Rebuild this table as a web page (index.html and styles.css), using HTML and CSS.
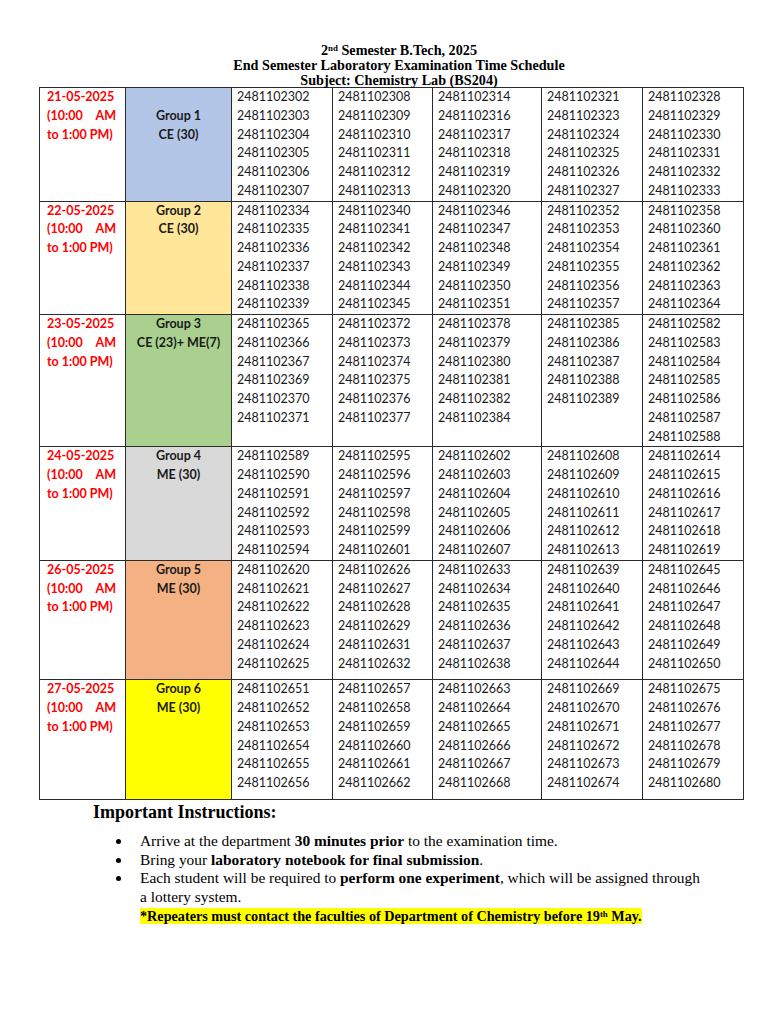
FILE: index.html
```html
<!DOCTYPE html>
<html>
<head>
<meta charset="utf-8">
<link rel="stylesheet" href="styles.css">
</head>
<body>
<div class="page">
  <header class="title">
    <div>2<sup>nd</sup> Semester B.Tech, 2025</div>
    <div>End Semester Laboratory Examination Time Schedule</div>
    <div>Subject: Chemistry Lab (BS204)</div>
  </header>

  <table class="sched">
    <colgroup>
      <col class="c-date"><col class="c-group"><col class="c-n1"><col class="c-n2"><col class="c-n3"><col class="c-n4"><col class="c-n5">
    </colgroup>
    <tr>
      <td class="date"><div>21-05-2025</div><div class="just"><span>(10:00</span><span>AM</span></div><div>to 1:00 PM)</div></td>
      <td class="group g1 offset"><div>Group 1</div><div>CE (30)</div></td>
      <td class="nums"><div>2481102302</div><div>2481102303</div><div>2481102304</div><div>2481102305</div><div>2481102306</div><div>2481102307</div></td>
      <td class="nums"><div>2481102308</div><div>2481102309</div><div>2481102310</div><div>2481102311</div><div>2481102312</div><div>2481102313</div></td>
      <td class="nums"><div>2481102314</div><div>2481102316</div><div>2481102317</div><div>2481102318</div><div>2481102319</div><div>2481102320</div></td>
      <td class="nums"><div>2481102321</div><div>2481102323</div><div>2481102324</div><div>2481102325</div><div>2481102326</div><div>2481102327</div></td>
      <td class="nums"><div>2481102328</div><div>2481102329</div><div>2481102330</div><div>2481102331</div><div>2481102332</div><div>2481102333</div></td>
    </tr>
    <tr>
      <td class="date"><div>22-05-2025</div><div class="just"><span>(10:00</span><span>AM</span></div><div>to 1:00 PM)</div></td>
      <td class="group g2"><div>Group 2</div><div>CE (30)</div></td>
      <td class="nums"><div>2481102334</div><div>2481102335</div><div>2481102336</div><div>2481102337</div><div>2481102338</div><div>2481102339</div></td>
      <td class="nums"><div>2481102340</div><div>2481102341</div><div>2481102342</div><div>2481102343</div><div>2481102344</div><div>2481102345</div></td>
      <td class="nums"><div>2481102346</div><div>2481102347</div><div>2481102348</div><div>2481102349</div><div>2481102350</div><div>2481102351</div></td>
      <td class="nums"><div>2481102352</div><div>2481102353</div><div>2481102354</div><div>2481102355</div><div>2481102356</div><div>2481102357</div></td>
      <td class="nums"><div>2481102358</div><div>2481102360</div><div>2481102361</div><div>2481102362</div><div>2481102363</div><div>2481102364</div></td>
    </tr>
    <tr>
      <td class="date"><div>23-05-2025</div><div class="just"><span>(10:00</span><span>AM</span></div><div>to 1:00 PM)</div></td>
      <td class="group g3"><div>Group 3</div><div>CE (23)+ ME(7)</div></td>
      <td class="nums"><div>2481102365</div><div>2481102366</div><div>2481102367</div><div>2481102369</div><div>2481102370</div><div>2481102371</div></td>
      <td class="nums"><div>2481102372</div><div>2481102373</div><div>2481102374</div><div>2481102375</div><div>2481102376</div><div>2481102377</div></td>
      <td class="nums"><div>2481102378</div><div>2481102379</div><div>2481102380</div><div>2481102381</div><div>2481102382</div><div>2481102384</div></td>
      <td class="nums"><div>2481102385</div><div>2481102386</div><div>2481102387</div><div>2481102388</div><div>2481102389</div></td>
      <td class="nums"><div>2481102582</div><div>2481102583</div><div>2481102584</div><div>2481102585</div><div>2481102586</div><div>2481102587</div><div>2481102588</div></td>
    </tr>
    <tr>
      <td class="date"><div>24-05-2025</div><div class="just"><span>(10:00</span><span>AM</span></div><div>to 1:00 PM)</div></td>
      <td class="group g4"><div>Group 4</div><div>ME (30)</div></td>
      <td class="nums"><div>2481102589</div><div>2481102590</div><div>2481102591</div><div>2481102592</div><div>2481102593</div><div>2481102594</div></td>
      <td class="nums"><div>2481102595</div><div>2481102596</div><div>2481102597</div><div>2481102598</div><div>2481102599</div><div>2481102601</div></td>
      <td class="nums"><div>2481102602</div><div>2481102603</div><div>2481102604</div><div>2481102605</div><div>2481102606</div><div>2481102607</div></td>
      <td class="nums"><div>2481102608</div><div>2481102609</div><div>2481102610</div><div>2481102611</div><div>2481102612</div><div>2481102613</div></td>
      <td class="nums"><div>2481102614</div><div>2481102615</div><div>2481102616</div><div>2481102617</div><div>2481102618</div><div>2481102619</div></td>
    </tr>
    <tr class="tall">
      <td class="date"><div>26-05-2025</div><div class="just"><span>(10:00</span><span>AM</span></div><div>to 1:00 PM)</div></td>
      <td class="group g5"><div>Group 5</div><div>ME (30)</div></td>
      <td class="nums"><div>2481102620</div><div>2481102621</div><div>2481102622</div><div>2481102623</div><div>2481102624</div><div>2481102625</div></td>
      <td class="nums"><div>2481102626</div><div>2481102627</div><div>2481102628</div><div>2481102629</div><div>2481102631</div><div>2481102632</div></td>
      <td class="nums"><div>2481102633</div><div>2481102634</div><div>2481102635</div><div>2481102636</div><div>2481102637</div><div>2481102638</div></td>
      <td class="nums"><div>2481102639</div><div>2481102640</div><div>2481102641</div><div>2481102642</div><div>2481102643</div><div>2481102644</div></td>
      <td class="nums"><div>2481102645</div><div>2481102646</div><div>2481102647</div><div>2481102648</div><div>2481102649</div><div>2481102650</div></td>
    </tr>
    <tr class="tall">
      <td class="date"><div>27-05-2025</div><div class="just"><span>(10:00</span><span>AM</span></div><div>to 1:00 PM)</div></td>
      <td class="group g6"><div>Group 6</div><div>ME (30)</div></td>
      <td class="nums"><div>2481102651</div><div>2481102652</div><div>2481102653</div><div>2481102654</div><div>2481102655</div><div>2481102656</div></td>
      <td class="nums"><div>2481102657</div><div>2481102658</div><div>2481102659</div><div>2481102660</div><div>2481102661</div><div>2481102662</div></td>
      <td class="nums"><div>2481102663</div><div>2481102664</div><div>2481102665</div><div>2481102666</div><div>2481102667</div><div>2481102668</div></td>
      <td class="nums"><div>2481102669</div><div>2481102670</div><div>2481102671</div><div>2481102672</div><div>2481102673</div><div>2481102674</div></td>
      <td class="nums"><div>2481102675</div><div>2481102676</div><div>2481102677</div><div>2481102678</div><div>2481102679</div><div>2481102680</div></td>
    </tr>
  </table>

  <section class="instr">
    <h2>Important Instructions:</h2>
    <ul>
      <li>Arrive at the department <b>30 minutes prior</b> to the examination time.</li>
      <li>Bring your <b>laboratory notebook for final submission</b>.</li>
      <li>Each student will be required to <b>perform one experiment</b>, which will be assigned through<br>a lottery system.</li>
    </ul>
    <p class="note"><mark>*Repeaters must contact the faculties of Department of Chemistry before 19<sup>th</sup> May.</mark></p>
  </section>
</div>
</body>
</html>
```

FILE: styles.css
```css
html, body {
  margin: 0;
  padding: 0;
  background: #ffffff;
}

.page {
  width: 768px;
  padding-top: 43px;
}

.title {
  margin-left: 39px;
  width: 720px;
  text-align: center;
  font-family: "Liberation Serif", "Times New Roman", serif;
  font-weight: bold;
  font-size: 14.2px;
  line-height: 15px;
  color: #000;
}

.title sup,
.note sup {
  font-size: 0.62em;
  line-height: 0;
  vertical-align: 0.45em;
}

.sched {
  margin-left: 39px;
  margin-top: -1px;
  border-collapse: collapse;
  table-layout: fixed;
  width: 704px;
  font-family: Lato, "Open Sans", sans-serif;
  font-size: 12.5px;
  line-height: 18.75px;
  color: #1a1a1a;
}

.c-date { width: 86px; }
.c-group { width: 106px; }
.c-n1 { width: 101px; }
.c-n2 { width: 100px; }
.c-n3 { width: 109px; }
.c-n4 { width: 101px; }
.c-n5 { width: 101px; }

.sched td {
  border: 1px solid #2b2b2b;
  vertical-align: top;
  padding: 0 0 0 5px;
}

.sched tr.tall td {
  padding-bottom: 6px;
}

.sched td.date {
  color: #ff0000;
  font-weight: bold;
  padding-left: 7px;
  padding-right: 9px;
}

.just {
  display: flex;
  justify-content: space-between;
}

.sched td.group {
  text-align: center;
  font-weight: bold;
  padding-left: 0;
  color: #1a1a1a;
}

.sched td.group.offset {
  padding-top: 18.75px;
}

.g1 { background: #b4c6e7; }
.g2 { background: #ffe699; }
.g3 { background: #a9d08e; }
.g4 { background: #d9d9d9; }
.g5 { background: #f4b183; }
.g6 { background: #ffff00; }

.instr {
  font-family: "Liberation Serif", "Times New Roman", serif;
  color: #000;
}

.instr h2 {
  margin: 1px 0 0 93px;
  font-size: 18px;
  line-height: 22px;
  font-weight: bold;
}

.instr ul {
  margin: 9px 0 0 0;
  padding-left: 140px;
  font-size: 15.4px;
  line-height: 18.8px;
  list-style: none;
}

.instr li {
  position: relative;
}

.instr li::before {
  content: "";
  position: absolute;
  left: -24px;
  top: 7px;
  width: 5px;
  height: 5px;
  border-radius: 50%;
  background: #000;
}

.note {
  margin: 0 0 0 140px;
  font-size: 14.2px;
  line-height: 18.8px;
  font-weight: bold;
}

.note mark {
  background: #ffff00;
  color: #000;
}
```
